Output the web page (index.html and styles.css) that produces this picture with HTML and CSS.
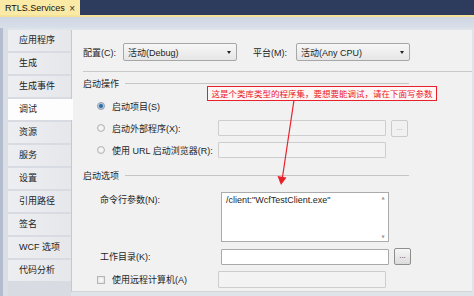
FILE: index.html
```html
<!DOCTYPE html>
<html lang="zh-CN">
<head>
    <meta charset="UTF-8">
    <meta name="viewport" content="width=device-width, initial-scale=1.0">
    <title>RTLS.Services - 调试</title>
    <link rel="stylesheet" href="styles.css">
</head>
<body>

    <!-- 文档标签 -->
    <div class="titlebar">
        <div class="doc-tab">
            <span>RTLS.Services</span>
            <span class="close">×</span>
        </div>
    </div>
    <div class="tab-line"></div>
    <div class="band"></div>

    <div class="workspace">
        <div class="edge"></div>

        <ul class="nav">
            <li>应用程序</li>
            <li>生成</li>
            <li>生成事件</li>
            <li class="active">调试</li>
            <li>资源</li>
            <li>服务</li>
            <li>设置</li>
            <li>引用路径</li>
            <li>签名</li>
            <li>WCF 选项</li>
            <li>代码分析</li>
        </ul>

        <div class="panel">
            <div class="config-row">
                <span class="cfg-label">配置(C):</span>
                <div class="select">活动(Debug)<span class="caret"></span></div>
                <span class="cfg-label platform">平台(M):</span>
                <div class="select">活动(Any CPU)<span class="caret"></span></div>
            </div>
            <div class="sep"></div>

            <!-- 启动操作 -->
            <div class="group-title"><span>启动操作</span><i></i></div>
            <div class="row first">
                <span class="radio checked"></span>
                <span class="row-label">启动项目(S)</span>
            </div>
            <div class="row">
                <span class="radio"></span>
                <span class="row-label">启动外部程序(X):</span>
                <div class="textbox disabled"></div>
                <div class="dots disabled">...</div>
            </div>
            <div class="row">
                <span class="radio"></span>
                <span class="row-label">使用 URL 启动浏览器(R):</span>
                <div class="textbox disabled"></div>
            </div>

            <!-- 启动选项 -->
            <div class="group-title second"><span>启动选项</span><i></i></div>
            <div class="row cmd-row">
                <span class="row-label plain">命令行参数(N):</span>
                <div class="textarea">
                    <span>/client:"WcfTestClient.exe"</span>
                    <div class="scroll"><b>▲</b><b>▼</b></div>
                </div>
            </div>
            <div class="row field-row">
                <span class="row-label plain">工作目录(K):</span>
                <div class="textbox"></div>
                <div class="dots">...</div>
            </div>
            <div class="row field-row remote">
                <span class="checkbox"></span>
                <span class="row-label">使用远程计算机(A)</span>
                <div class="textbox disabled"></div>
            </div>
        </div>
    </div>

    <!-- 标注 -->
    <div class="note">这是个类库类型的程序集，要想要能调试，请在下面写参数</div>
    <svg class="arrow" width="474" height="296" viewBox="0 0 474 296">
        <line x1="294" y1="100" x2="282.5" y2="177" stroke="#e8202a" stroke-width="1.2"/>
        <polygon points="277.5,176 286.5,177.5 281,185" fill="#e8202a"/>
    </svg>

</body>
</html>
```

FILE: styles.css
```css
body {
    margin: 0;
    padding: 0;
    width: 474px;
    height: 296px;
    overflow: hidden;
    position: relative;
    background-color: #f6f6f7;
    font-family: "Liberation Sans", "Noto Sans CJK SC", sans-serif;
    font-size: 9px;
    color: #1e1e1e;
}

.titlebar {
    height: 15px;
    background-color: #2d3b5c;
    display: flex;
}

.doc-tab {
    width: 80px;
    background-color: #fbe9a6;
    display: flex;
    align-items: center;
    justify-content: space-between;
    padding: 1px 5px 0 5px;
    box-sizing: border-box;
    font-size: 9px;
    color: #111;
}

.doc-tab .close {
    font-size: 10px;
    color: #333;
}

.tab-line {
    height: 2px;
    background-color: #f4e39b;
}

.band {
    height: 11px;
    background: linear-gradient(#cfd7e4, #d9dfe9);
}

.workspace {
    display: flex;
    height: 268px;
    background-color: #dfe3ea;
}

.edge {
    width: 8px;
    background: linear-gradient(90deg, #b3bdcd 0, #b3bdcd 3px, #dadfe6 3px);
}

/* 左侧导航 */
.nav {
    list-style: none;
    margin: 2px 0 0;
    padding: 0;
    width: 63px;
    background-color: #d8dce2;
}

.nav li {
    height: 21px;
    line-height: 21px;
    margin-bottom: 2px;
    padding-left: 11px;
    background: linear-gradient(90deg, #eceef1, #e5e7eb);
    color: #222;
}

.nav li.active {
    background: #fdfdfd;
    margin-right: -2px;
    position: relative;
}

.panel {
    width: 401px;
    margin-top: 2px;
    height: 262px;
    background-color: #f1f1f1;
    border-left: 1px solid #c4c9d1;
    border-bottom: 1px solid #d4d4d4;
    box-sizing: border-box;
    padding-left: 11px;
}

.config-row {
    display: flex;
    align-items: center;
    margin-top: 13px;
    height: 18px;
}

.cfg-label {
    width: 40px;
}

.cfg-label.platform {
    width: 43px;
    margin-left: 16px;
}

.select {
    width: 114px;
    height: 18px;
    box-sizing: border-box;
    border: 1px solid #a7a7a7;
    border-radius: 2px;
    background: linear-gradient(#f7f7f7, #e6e6e6);
    padding-left: 4px;
    display: flex;
    align-items: center;
    position: relative;
}

.caret {
    position: absolute;
    right: 5px;
    top: 7px;
    border-left: 2.5px solid transparent;
    border-right: 2.5px solid transparent;
    border-top: 3px solid #222;
}

.sep {
    height: 1px;
    margin-top: 10px;
    background-color: #c9c9c9;
}

.group-title {
    display: flex;
    align-items: center;
    width: 326px;
    height: 12px;
    margin-top: 5px;
}

.group-title.second {
    margin-top: 8px;
}

.group-title i {
    flex: 1;
    height: 1px;
    margin-left: 6px;
    background-color: #c6c6c6;
}

.row {
    display: flex;
    align-items: center;
    height: 22px;
    padding-left: 14px;
}

.row.first {
    margin-top: 6px;
}

.radio,
.checkbox {
    width: 8px;
    height: 8px;
    box-sizing: border-box;
    border: 1px solid #b5b5b5;
    background: radial-gradient(#ffffff, #dcdcdc);
    margin-right: 7px;
}

.radio {
    border-radius: 50%;
}

.radio.checked {
    background: radial-gradient(#2f6fa8 0, #2f6fa8 1.5px, #b8cbe0 2.5px, #e6e6e6 4px);
    border-color: #8f9bab;
}

.row-label {
    width: 106px;
}

.row-label.plain {
    width: 121px;
    padding-left: 3px;
}

.textbox {
    width: 168px;
    height: 16px;
    box-sizing: border-box;
    border: 1px solid #a9a9a9;
    border-radius: 1px;
    background-color: #ffffff;
}

.textbox.disabled {
    border-color: #cdcdcd;
    background-color: #f3f3f3;
}

.dots {
    width: 17px;
    height: 17px;
    margin-left: 5px;
    box-sizing: border-box;
    border: 1px solid #8e8e8e;
    border-radius: 2px;
    background: linear-gradient(#f6f6f6, #dcdcdc);
    text-align: center;
    line-height: 14px;
    font-size: 8px;
    color: #333;
}

.dots.disabled {
    border-color: #cbcbcb;
    background: #f1f1f1;
    color: #a8a8a8;
}

.cmd-row {
    align-items: flex-start;
    height: 50px;
    margin-top: 11px;
}

.cmd-row .row-label {
    margin-top: 1px;
}

.textarea {
    width: 168px;
    height: 50px;
    box-sizing: border-box;
    border: 1px solid #ababab;
    background-color: #ffffff;
    display: flex;
    justify-content: space-between;
    padding: 2px 0 0 4px;
    font-size: 9px;
}

.scroll {
    width: 10px;
    display: flex;
    flex-direction: column;
    justify-content: space-between;
    align-items: center;
    padding-bottom: 2px;
    font-size: 4px;
    color: #9a9a9a;
    font-family: "DejaVu Sans", sans-serif;
}

.scroll b {
    font-weight: normal;
}

.field-row {
    height: 17px;
    margin-top: 6px;
}

.remote .textbox {
    height: 17px;
}

.note {
    position: absolute;
    left: 207px;
    top: 86px;
    width: 230px;
    height: 15px;
    box-sizing: border-box;
    border: 1px solid #e8202a;
    background-color: #fff7f7;
    color: #e8202a;
    font-family: "Noto Sans CJK SC", sans-serif;
    font-size: 8.5px;
    line-height: 13px;
    text-align: center;
    white-space: nowrap;
}

.arrow {
    position: absolute;
    left: 0;
    top: 0;
}
```
